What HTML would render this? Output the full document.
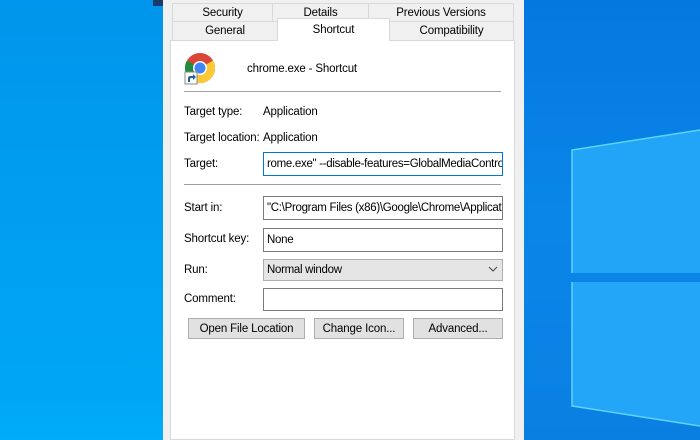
<!DOCTYPE html>
<html style="width:700px;height:440px;overflow:hidden"><head><style>
*{margin:0;padding:0;box-sizing:border-box}
body{width:700px;height:440px;overflow:hidden;position:relative;font-family:"Liberation Sans",sans-serif;font-size:11.5px;letter-spacing:-0.15px;color:#000;background:#0088e6}
.bgl{position:absolute;left:0;top:0;width:163px;height:440px;background:linear-gradient(180deg,#0095ec,#00a6f5 90%,#00adf8)}
.bgr{position:absolute;left:524px;top:0;width:176px;height:440px;background:linear-gradient(180deg,#0578e0,#0a86e8 50%,#0a7fe2)}
.dlg{position:absolute;left:163px;top:0;width:361px;height:440px;background:#f0f0f0}
.panel{position:absolute;left:170px;top:40px;width:345px;height:400px;background:#fff;border:1px solid #d9d9d9}
.tab{position:absolute;background:#f0f0f0;border:1px solid #d9d9d9;text-align:center;line-height:18px}
.sel{background:#fff;border-bottom:none;line-height:22px}
.a{position:absolute}
.lb{position:absolute;margin-top:1px}
.box{position:absolute;border:1px solid #7a7a7a;background:#fff;padding-left:3px;line-height:22px;white-space:nowrap;overflow:hidden;letter-spacing:-0.3px}
.btn{position:absolute;background:#e1e1e1;border:1px solid #adadad;text-align:center;line-height:20px}
.sep{position:absolute;height:1px;background:#a0a0a0}
</style></head><body>
<div class="bgl"></div>
<div class="bgr"></div>
<svg class="a" style="left:524px;top:0" width="176" height="440">
<polygon points="48,150 176,130 176,273 48,273" fill="#23a5f7"/>
<polygon points="48,282 176,282 176,426 48,406" fill="#23a6f8"/>
<polyline points="176,130 48,150 48,273" fill="none" stroke="#5fd4ff" stroke-width="1.5"/>
<polyline points="48,282 48,406 176,426" fill="none" stroke="#5fd4ff" stroke-width="1.5"/>
</svg>
<div class="a" style="left:153px;top:0;width:10px;height:6px;background:#1a3a6a"></div>
<div class="dlg"></div>
<div class="tab" style="left:172px;top:3px;width:101px;height:19px">Security</div>
<div class="tab" style="left:272px;top:3px;width:97px;height:19px">Details</div>
<div class="tab" style="left:368px;top:3px;width:146px;height:19px">Previous Versions</div>
<div class="tab" style="left:172px;top:21px;width:106px;height:20px">General</div>
<div class="tab" style="left:389px;top:21px;width:125px;height:20px">Compatibility</div>
<div class="panel"></div>
<div class="tab sel" style="left:277px;top:18px;width:113px;height:23px">Shortcut</div>
<svg class="a" style="left:184px;top:52px" width="34" height="34" viewBox="0 0 34 34">
<circle cx="16" cy="16" r="15" fill="#db4437"/>
<path d="M16 16 L29 8.5 A15 15 0 0 1 8.5 29 Z" fill="#fcc934"/>
<path d="M16 16 L8.5 29 A15 15 0 0 1 1 16 A15 15 0 0 1 3 8.5 Z" fill="#1e8e3e"/>
<circle cx="16" cy="16" r="7" fill="#fff"/>
<circle cx="16" cy="16" r="5.5" fill="#4285f4"/>
<rect x="1" y="20" width="12" height="12" fill="#fff" stroke="#888"/>
<path d="M4 30 L4 26 Q4 24 7 24 L9 24 L9 22 L12 25 L9 28 L9 26 L7 26 Q6 26 6 28 L6 30Z" fill="#1f5ea8"/>
</svg>
<div class="lb" style="left:247px;top:62px">chrome.exe - Shortcut</div>
<div class="sep" style="left:184px;top:91px;width:317px"></div>
<div class="lb" style="left:184px;top:105px">Target type:</div>
<div class="lb" style="left:263px;top:105px">Application</div>
<div class="lb" style="left:184px;top:131px">Target location:</div>
<div class="lb" style="left:263px;top:131px">Application</div>
<div class="lb" style="left:184px;top:157px">Target:</div>
<div class="box" style="left:263px;top:152px;width:240px;height:24px;border-color:#0078d7">rome.exe" --disable-features=GlobalMediaControls</div>
<div class="sep" style="left:184px;top:184px;width:317px"></div>
<div class="lb" style="left:184px;top:201px">Start in:</div>
<div class="box" style="left:263px;top:196px;width:240px;height:24px">"C:\Program Files (x86)\Google\Chrome\Applicati</div>
<div class="lb" style="left:184px;top:232px">Shortcut key:</div>
<div class="box" style="left:263px;top:228px;width:240px;height:24px">None</div>
<div class="lb" style="left:184px;top:263px">Run:</div>
<div class="box" style="left:263px;top:259px;width:240px;height:22px;background:#e5e5e5;border-color:#adadad;line-height:20px">Normal window</div>
<svg class="a" style="left:488px;top:265px" width="10" height="8"><polyline points="1,2 5,6 9,2" fill="none" stroke="#444" stroke-width="1"/></svg>
<div class="lb" style="left:184px;top:292px">Comment:</div>
<div class="box" style="left:263px;top:288px;width:240px;height:23px"></div>
<div class="btn" style="left:188px;top:318px;width:117px;height:21px">Open File Location</div>
<div class="btn" style="left:314px;top:318px;width:90px;height:21px">Change Icon...</div>
<div class="btn" style="left:413px;top:318px;width:90px;height:21px">Advanced...</div>
</body></html>
